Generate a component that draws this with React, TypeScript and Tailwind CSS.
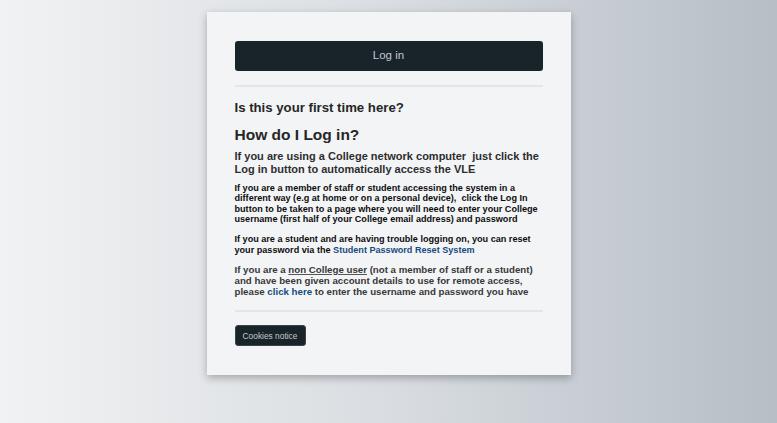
import React from "react";

export default function App() {
  return (
    <div
      className="min-h-[423px] w-full bg-linear-to-r from-[#f1f2f3] via-[#d9dde1] to-[#b6bec6] pt-[12px]"
      style={{ fontFamily: '"Liberation Sans", Arial, sans-serif' }}
    >
      <div className="mx-auto w-[364px] bg-[#f3f4f6] px-[28px] pt-[29px] pb-[29px] shadow-[0_3px_8px_rgba(0,0,0,0.28)]">
        <button className="flex h-[30px] w-full items-center justify-center rounded-[3px] bg-[#19232a] text-[11.5px] text-[#c3c8cc]">
          Log in
        </button>
        <div className="mt-[14px] h-[2px] bg-[#e3e5e9]" />
        <h3 className="mt-[13px] text-[13.2px] leading-[15px] font-bold text-[#262626]">
          Is this your first time here?
        </h3>
        <h2 className="mt-[11px] text-[15.5px] leading-[18px] font-bold text-[#262626]">
          How do I Log in?
        </h2>
        <p className="mt-[5.5px] text-[11px] leading-[13px] font-bold text-[#2e2e2e] whitespace-nowrap">
          If you are using a College network computer&nbsp; just click the
          <br />
          Log in button to automatically access the VLE
        </p>
        <p className="mt-[7.5px] text-[9.1px] leading-[10.4px] font-bold text-[#0d0d0d] whitespace-nowrap">
          If you are a member of staff or student accessing the system in a
          <br />
          different way (e.g at home or on a personal device),&nbsp; click the Log In
          <br />
          button to be taken to a page where you will need to enter your College
          <br />
          username (first half of your College email address) and password
        </p>
        <p className="mt-[9.5px] text-[9.1px] leading-[10.4px] font-bold text-[#0d0d0d] whitespace-nowrap">
          If you are a student and are having trouble logging on, you can reset
          <br />
          your password via the{" "}
          <a className="text-[#174a80]">Student Password Reset System</a>
        </p>
        <p className="mt-[9px] text-[9.7px] leading-[11px] font-bold text-[#383838] whitespace-nowrap">
          If you are a <span className="underline decoration-[#555]">non College user</span> (not a member of staff or a student)
          <br />
          and have been given account details to use for remote access,
          <br />
          please <a className="text-[#174a80]">click here</a> to enter the username and password you have
        </p>
        <div className="mt-[13.5px] h-[2px] bg-[#e3e5e9]" />
        <button className="mt-[13px] flex h-[21px] w-[71px] items-center justify-center rounded-[3px] border border-[#3a434a] bg-[#19232a] text-[8.4px] text-[#c3c8cc]">
          Cookies notice
        </button>
      </div>
    </div>
  );
}
